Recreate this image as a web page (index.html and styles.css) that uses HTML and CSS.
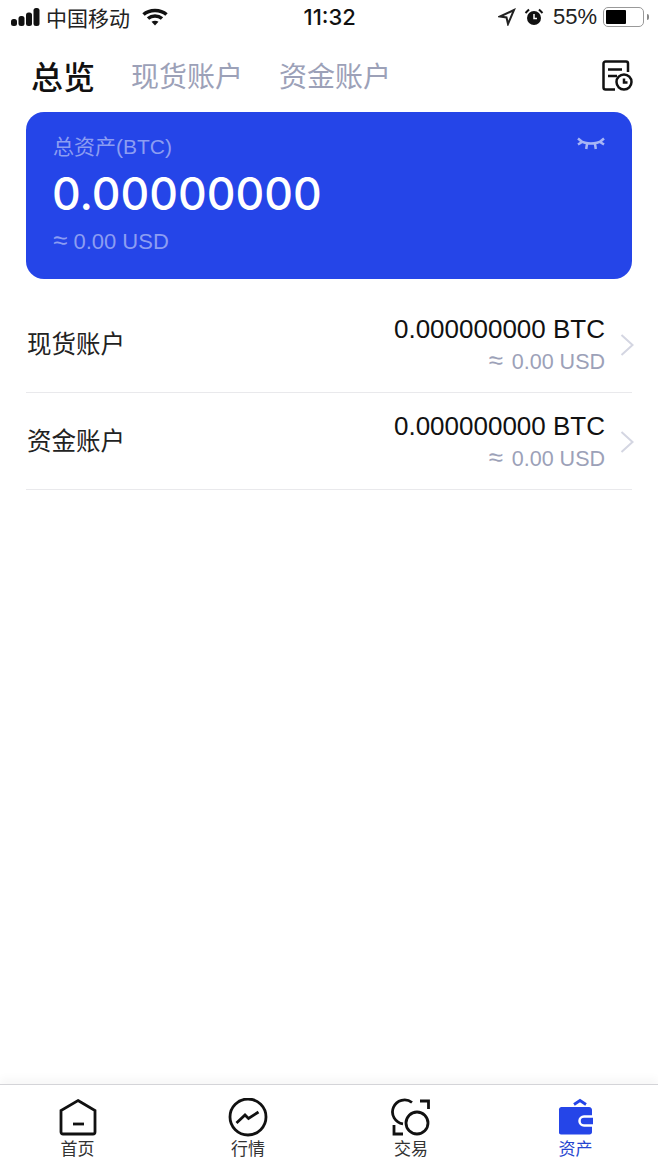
FILE: index.html
```html
<!DOCTYPE html>
<html>
  <head>
    <title>资产</title>
    <link rel="stylesheet" href="styles.css">
  </head>

  <body>
    <div class="phone">
      <header class="statusbar">
        <div class="status-left">
          <svg class="signal" width="29" height="18" viewBox="0 0 29 18">
            <rect x="0" y="11" width="6" height="7" rx="2.500" />
            <rect x="7.500" y="8" width="6" height="10" rx="2.500" />
            <rect x="15" y="4.500" width="6" height="13.500" rx="2.500" />
            <rect x="22.500" y="0" width="6" height="18" rx="2.500" />
          </svg>
          <span class="carrier">中国移动</span>
          <svg class="wifi" width="26" height="18" viewBox="0 0 26 18">
            <path d="M1.500 6.500C7.500 1 18.500 1 24.500 6.500" />
            <path d="M6 10.500C10 7 16 7 20 10.500" />
            <path class="wifi-dot" d="M13 17.500L9.500 13.800C11.500 12.300 14.500 12.300 16.500 13.800Z" />
          </svg>
        </div>
        <div class="status-time">11:32</div>
        <div class="status-right">
          <svg class="locate" width="18" height="18" viewBox="0 0 18 18">
            <path d="M16 2L2 8.500L8.500 9.500L10 16Z" />
          </svg>
          <svg class="alarm" width="20" height="18" viewBox="0 0 20 18">
            <circle cx="10" cy="10" r="7" fill="#111" />
            <path d="M10 6V10.500H13" stroke="#fff" stroke-width="1.500" fill="none" />
            <path d="M1.500 5L5 1.500M18.500 5L15 1.500" stroke="#111" stroke-width="2" fill="none" />
          </svg>
          <span class="battery-pct">55%</span>
          <div class="battery">
            <div class="battery-body">
              <div class="battery-fill"></div>
            </div>
            <div class="battery-tip"></div>
          </div>
        </div>
      </header>

      <nav class="tabs">
        <span class="tab tab-active">总览</span>
        <span class="tab">现货账户</span>
        <span class="tab">资金账户</span>
        <svg class="history" width="34" height="34" viewBox="0 0 34 34">
          <path d="M15 31.500H5.500A2 2 0 0 1 3.500 29.500V5.500A2 2 0 0 1 5.500 3.500H26A2 2 0 0 1 28 5.500V14" />
          <path d="M8 11.500H22M8 18H17" />
          <circle cx="24" cy="24" r="7.500" />
          <path d="M24 20.500V24.500H27.500" />
        </svg>
      </nav>

      <section class="card">
        <div class="card-top">
          <span class="card-label">总资产(BTC)</span>
          <svg class="eye" width="28" height="14" viewBox="0 0 28 14">
            <path d="M3 3.500C9 7.500 19 7.500 25 3.500M1 1.500L5 4.800M27 1.500L23 4.800M1 7.500L5 5M27 7.500L23 5M10 7L9.200 12M18 7L18.800 12" />
          </svg>
        </div>
        <div class="card-value">0.00000000</div>
        <div class="card-usd"><span class="approx">≈</span> 0.00 USD</div>
      </section>

      <ul class="accounts">
        <li class="account">
          <span class="account-name">现货账户</span>
          <div class="account-amounts">
            <div class="account-btc">0.000000000 BTC</div>
            <div class="account-usd"><span class="approx">≈</span> 0.00 USD</div>
          </div>
          <svg class="chevron" width="16" height="24" viewBox="0 0 16 24">
            <path d="M2.500 2L13.500 12L2.500 22" />
          </svg>
        </li>
        <li class="account">
          <span class="account-name">资金账户</span>
          <div class="account-amounts">
            <div class="account-btc">0.000000000 BTC</div>
            <div class="account-usd"><span class="approx">≈</span> 0.00 USD</div>
          </div>
          <svg class="chevron" width="16" height="24" viewBox="0 0 16 24">
            <path d="M2.500 2L13.500 12L2.500 22" />
          </svg>
        </li>
      </ul>

      <footer class="tabbar">
        <a class="tabbar-item">
          <svg class="tabbar-icon" width="40" height="40" viewBox="0 0 40 40">
            <path d="M20 2.500L37 12.500V34A2 2 0 0 1 35 36H5A2 2 0 0 1 3 34V12.500Z" />
            <path d="M15 26H26" />
          </svg>
          <span>首页</span>
        </a>
        <a class="tabbar-item">
          <svg class="tabbar-icon" width="40" height="40" viewBox="0 0 40 40">
            <circle cx="20" cy="19" r="18" />
            <path d="M8.500 25L17 17L20.500 20.500L30.500 14" />
          </svg>
          <span>行情</span>
        </a>
        <a class="tabbar-item">
          <svg class="tabbar-icon" width="40" height="40" viewBox="0 0 40 40">
            <path d="M21 4.500A12 12 0 1 0 12 25.800" />
            <circle cx="26" cy="25" r="11" />
            <path d="M29 3H37.500V11M3 27V36H12" />
          </svg>
          <span>交易</span>
        </a>
        <a class="tabbar-item tabbar-item-active">
          <svg class="tabbar-icon" width="40" height="40" viewBox="0 0 40 40">
            <path class="wallet" d="M3 11.500C3 10 4 9 5.500 9H33C35 9 36 10.500 36 12V34C36 35.500 35 36.500 33.500 36.500H5C3.800 36.500 3 35.700 3 34.500Z" />
            <path class="wallet-tip" d="M18 6.500L24 2.500L30 6.500" />
            <path class="wallet-notch" d="M37 18.500H28A4.500 4.500 0 0 0 28 27.500H37" />
          </svg>
          <span>资产</span>
        </a>
      </footer>
    </div>
  </body>
</html>
```

FILE: styles.css
```css
* {
  box-sizing: border-box;
}
body {
  margin: 0;
  background: #fff;
  font-family: "Liberation Sans", "Noto Sans CJK SC", sans-serif;
  color: #111;
}
.phone {
  width: 658px;
  height: 1170px;
  display: flex;
  flex-direction: column;
  overflow: hidden;
}

/* status bar */
.statusbar {
  height: 38px;
  padding: 0 9px 4px 11px;
  display: grid;
  grid-template-columns: 1fr auto 1fr;
  align-items: center;
}
.status-left {
  display: flex;
  align-items: center;
}
.signal {
  fill: #111;
  margin-right: 6px;
}
.carrier {
  font-size: 21px;
  color: #222;
}
.wifi {
  margin-left: 12px;
  fill: none;
  stroke: #111;
  stroke-width: 3.500;
}
.wifi-dot {
  fill: #111;
  stroke: none;
}
.status-time {
  font-size: 22px;
  font-family: "Inter", "Liberation Sans", sans-serif;
  font-weight: 500;
  width: 56px;
  white-space: nowrap;
  margin-left: 3px;
}
.status-right {
  display: flex;
  align-items: center;
  justify-content: flex-end;
}
.locate {
  fill: none;
  stroke: #222;
  stroke-width: 2;
  margin-right: 8px;
}
.alarm {
  margin-right: 9px;
}
.battery-pct {
  font-size: 22px;
  color: #222;
}
.battery {
  display: flex;
  align-items: center;
  margin-left: 6px;
}
.battery-body {
  width: 41px;
  height: 20px;
  border: 1.500px solid #999;
  border-radius: 5px;
  padding: 2px;
}
.battery-fill {
  width: 20px;
  height: 100%;
  background: #000;
  border-radius: 1px;
}
.battery-tip {
  width: 2px;
  height: 6px;
  margin-left: 3px;
  background: #888;
  border-radius: 0 2px 2px 0;
}

/* tabs */
.tabs {
  height: 74px;
  padding: 0 24px 0 31px;
  display: flex;
  align-items: center;
}
.tab {
  font-size: 28px;
  color: #9ca1b8;
  margin-right: 36px;
  white-space: nowrap;
}
.tab-active {
  font-size: 32px;
  font-weight: 500;
  color: #111;
}
.history {
  margin-left: auto;
  fill: none;
  stroke: #111;
  stroke-width: 2.500;
}

/* balance card */
.card {
  margin: 0 26px;
  height: 167px;
  padding: 22px 26px 0 27px;
  background: #2545e8;
  border-radius: 18px;
}
.card-top {
  height: 26px;
  margin-top: -2px;
  display: flex;
  align-items: center;
  justify-content: space-between;
}
.card-label {
  font-size: 21px;
  color: #8c9df2;
}
.eye {
  fill: none;
  stroke: #a8b6f5;
  stroke-width: 2.500;
  margin-top: -2px;
  margin-right: 1px;
}
.card-value {
  margin-top: 8px;
  margin-left: -1px;
  font-size: 44.500px;
  line-height: 56px;
  font-family: "Inter", "Liberation Sans", sans-serif;
  font-weight: 500;
  color: #fff;
}
.card-usd {
  margin-top: 7px;
  font-size: 22px;
  color: #8c9df2;
}
.approx {
  font-size: 26px;
  line-height: 1px;
}

/* account rows */
.accounts {
  list-style: none;
  margin: 0 26px;
  padding: 17px 0 0;
}
.account {
  height: 97px;
  display: flex;
  align-items: center;
  border-bottom: 1px solid #e9e9ec;
}
.account-name {
  font-size: 24.500px;
  margin-left: 1px;
  margin-top: -3px;
  color: #222;
}
.account-amounts {
  margin-left: auto;
  text-align: right;
}
.account-btc {
  font-size: 26px;
  line-height: 30px;
  color: #111;
}
.account-usd {
  margin-top: 5px;
  font-size: 21.500px;
  line-height: 26px;
  color: #9ca1b8;
}
.account-usd .approx {
  margin-right: 3px;
}
.chevron {
  margin-left: 14px;
  margin-right: -3px;
  margin-top: 2px;
  fill: none;
  stroke: #d4d6e2;
  stroke-width: 2;
}

/* bottom tabs */
.tabbar {
  margin-top: auto;
  height: 86px;
  padding-top: 13px;
  border-top: 1px solid #d4d4d8;
  box-shadow: 0 -6px 8px rgba(0, 0, 0, 0.03);
  display: grid;
  grid-template-columns: 155px 186px 140px 1fr;
}
.tabbar-item {
  display: flex;
  flex-direction: column;
  align-items: center;
  font-size: 17px;
  line-height: 20px;
  color: #333;
}
.tabbar-item span {
  margin-top: 2px;
}
.tabbar-icon {
  fill: none;
  stroke: #111;
  stroke-width: 2.800;
}
.tabbar-item-active {
  color: #2545d0;
  padding-left: 12px;
}
.wallet {
  fill: #2545e8;
  stroke: none;
}
.wallet-tip {
  stroke: #2545e8;
}
.wallet-notch {
  fill: #2545e8;
  stroke: #fff;
  stroke-width: 2.500;
}
```
